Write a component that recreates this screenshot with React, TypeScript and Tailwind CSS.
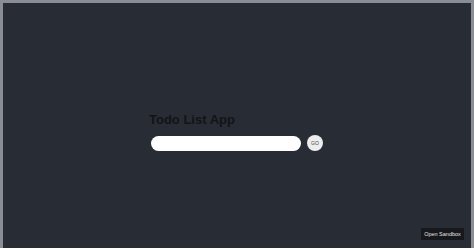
import React from "react";

export default function App() {
  return (
    <div
      className="relative h-[248px] w-[474px] overflow-hidden border-x-[3px] border-t-[3px] border-[#8a8d93] bg-[#282c34]"
      style={{ fontFamily: '"Liberation Sans", Arial, sans-serif' }}
    >
      <div className="flex h-full flex-col items-center justify-center pt-[12px]">
        <div className="flex flex-col">
          <h1 className="ml-[-2px] text-[13px] font-bold leading-[15px] text-[#121418]">Todo List App</h1>
          <div className="mt-[8px] flex items-center gap-[6px]">
            <input
              type="text"
              className="h-[15px] w-[150px] rounded-full border-0 bg-white outline-none"
            />
            <button className="flex h-[16px] w-[16px] items-center justify-center rounded-full bg-[#ededed] text-[5px] leading-none text-[#444]">
              GO
            </button>
          </div>
        </div>
      </div>
      <div className="absolute bottom-[8px] right-[7px] flex h-[12px] w-[43px] items-center justify-center bg-[#16181c] text-[5.5px] text-[#e5e5e5]">
        Open Sandbox
      </div>
    </div>
  );
}
